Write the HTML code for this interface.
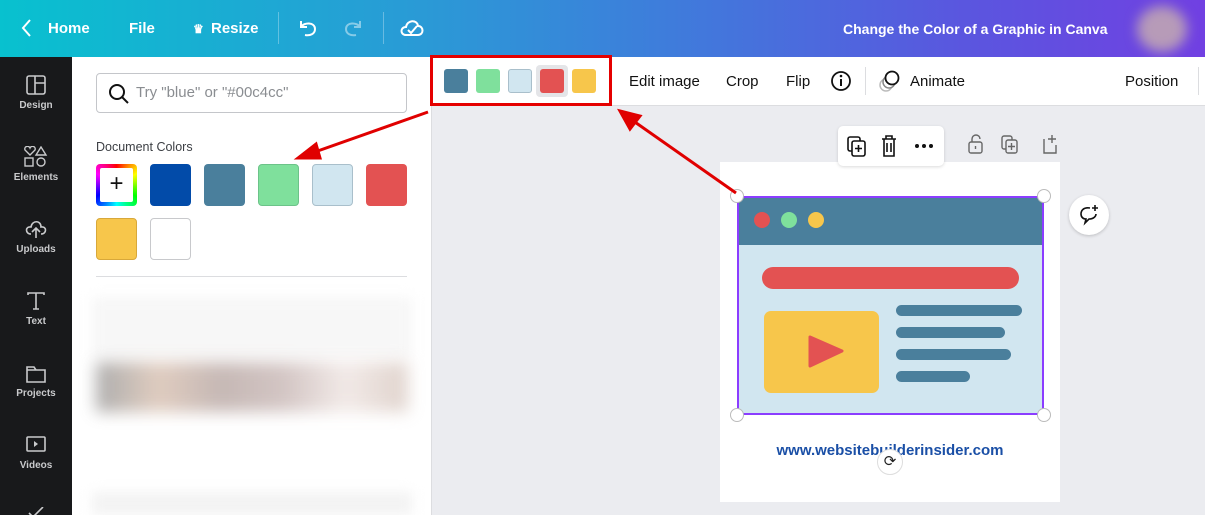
<!DOCTYPE html>
<html style="width:1205px;height:515px;overflow:hidden"><head><meta charset="utf-8"><style>
*{margin:0;padding:0;box-sizing:border-box}
body{width:1205px;height:515px;overflow:hidden;position:relative;font-family:"Liberation Sans",sans-serif;background:#ebecf0}
.a{position:absolute}
.top{left:0;top:0;width:1205px;height:57px;background:linear-gradient(90deg,#08c1cf 0%,#2a9ad6 35%,#3e7ddb 55%,#5a56df 80%,#7140e2 100%)}
.top span{position:absolute;color:#fff;font-weight:bold;font-size:15px;top:20px}
.side{left:0;top:57px;width:72px;height:458px;background:#18191b;overflow:hidden}
.side div{position:absolute;width:72px;text-align:center;color:#c9cacc;font-size:10px;font-weight:bold}
.panel{left:72px;top:57px;width:360px;height:458px;background:#fff;border-right:1px solid #dcdde0;overflow:hidden}
.sw{position:absolute;width:41px;height:42px;border-radius:4px}
.tb{left:432px;top:57px;width:773px;height:49px;background:#fff;border-bottom:1px solid #dcdde0}
.tb span{position:absolute;top:16px;font-size:15px;color:#111}
.ts{position:absolute;top:12px;width:24px;height:24px;border-radius:3px}
</style></head><body>
<div class="a top">
<svg class="a" style="left:20px;top:18px" width="14" height="20"><path d="M10 2 L3 10 L10 18" stroke="#fff" stroke-width="2" fill="none"/></svg>
<span style="left:48px">Home</span><span style="left:129px">File</span>
<span style="left:193px;font-size:12px;top:22px">♛</span><span style="left:211px">Resize</span>
<div class="a" style="left:278px;top:12px;width:1px;height:32px;background:rgba(255,255,255,.3)"></div>
<svg class="a" style="left:297px;top:17px" width="22" height="22"><path d="M4 4 v6 h6 M4 10 C7 5 18 5 18 12 C18 17 13 19 8 18" stroke="#fff" stroke-width="2" fill="none"/></svg>
<svg class="a" style="left:342px;top:17px" width="22" height="22"><path d="M18 4 v6 h-6 M18 10 C15 5 4 5 4 12 C4 17 9 19 14 18" stroke="rgba(255,255,255,.45)" stroke-width="2" fill="none"/></svg>
<div class="a" style="left:383px;top:12px;width:1px;height:32px;background:rgba(255,255,255,.3)"></div>
<svg class="a" style="left:399px;top:16px" width="26" height="22"><path d="M7 19 C1 19 1 11 7 11 C8 4 18 3 19 10 C25 10 25 19 19 19 Z" stroke="#fff" stroke-width="2" fill="none"/><path d="M9 14 l3 3 l6-7" stroke="#fff" stroke-width="2" fill="none"/></svg>
<span style="left:843px;font-size:14px;top:21px">Change the Color of a Graphic in Canva</span>
<div class="a" style="left:1137px;top:6px;width:50px;height:46px;border-radius:50%;background:#b79bb8;filter:blur(6px)"></div>
</div>
<div class="a side">
<svg class="a" style="left:26px;top:18px" width="20" height="20"><rect x="1" y="1" width="18" height="18" rx="2" stroke="#c9cacc" stroke-width="1.6" fill="none"/><path d="M9 1v18M9 8h10" stroke="#c9cacc" stroke-width="1.6"/></svg>
<div style="top:43px">Design</div>
<svg class="a" style="left:24px;top:89px" width="24" height="22"><path d="M6 9 L1 4 A2.5 2.5 0 0 1 6 2 A2.5 2.5 0 0 1 11 4 Z" stroke="#c9cacc" stroke-width="1.4" fill="none"/><path d="M17 1 L22 9 H12 Z" stroke="#c9cacc" stroke-width="1.4" fill="none"/><rect x="1" y="12" width="8" height="8" stroke="#c9cacc" stroke-width="1.4" fill="none"/><circle cx="17" cy="16" r="4" stroke="#c9cacc" stroke-width="1.4" fill="none"/></svg>
<div style="top:115px">Elements</div>
<svg class="a" style="left:24px;top:161px" width="24" height="22"><path d="M7 16 C1 16 1 8 7 9 C8 2 17 2 17 9 C23 8 23 16 17 16 M12 20 V10 M8 14 l4-4 l4 4" stroke="#c9cacc" stroke-width="1.6" fill="none"/></svg>
<div style="top:187px">Uploads</div>
<svg class="a" style="left:27px;top:235px" width="18" height="18"><path d="M1 3 V1 H17 V3 M9 1 V17 M6 17 H12" stroke="#c9cacc" stroke-width="1.6" fill="none"/></svg>
<div style="top:259px">Text</div>
<svg class="a" style="left:26px;top:308px" width="20" height="18"><path d="M1 2 H8 L10 5 H19 V17 H1 Z M1 5 H10" stroke="#c9cacc" stroke-width="1.6" fill="none"/></svg>
<div style="top:331px">Projects</div>
<svg class="a" style="left:26px;top:379px" width="20" height="16"><rect x="1" y="1" width="18" height="14" rx="1" stroke="#c9cacc" stroke-width="1.6" fill="none"/><path d="M8 5 L12 8 L8 11 Z" fill="#c9cacc"/></svg>
<div style="top:403px">Videos</div>
<svg class="a" style="left:28px;top:450px" width="16" height="10"><path d="M1 6 L5 10 L15 0" stroke="#c9cacc" stroke-width="1.6" fill="none"/></svg>
</div>
<div class="a panel">
<div class="a" style="left:24px;top:16px;width:311px;height:40px;border:1px solid #c4c6ca;border-radius:4px"></div>
<svg class="a" style="left:36px;top:26px" width="22" height="22"><circle cx="9" cy="9" r="7" stroke="#111" stroke-width="2" fill="none"/><path d="M14 14 L20 20" stroke="#111" stroke-width="2"/></svg>
<div class="a" style="left:64px;top:27px;font-size:15px;color:#8a8d91">Try "blue" or "#00c4cc"</div>
<div class="a" style="left:24px;top:83px;font-size:12.5px;color:#3c3f44">Document Colors</div>
<div class="sw" style="left:24px;top:107px;background:conic-gradient(red,yellow,lime,cyan,blue,magenta,red);padding:4px"><div style="width:33px;height:34px;background:#fff;border-radius:2px;text-align:center;font-size:24px;line-height:32px;color:#111">+</div></div>
<div class="sw" style="left:78px;top:107px;background:#024ba9"></div>
<div class="sw" style="left:132px;top:107px;background:#4a7f9c"></div>
<div class="sw" style="left:186px;top:107px;background:#7fe09c;border:1px solid #6cc389"></div>
<div class="sw" style="left:240px;top:107px;background:#d1e6f0;border:1px solid #a9bfcb"></div>
<div class="sw" style="left:294px;top:107px;background:#e35252"></div>
<div class="sw" style="left:24px;top:161px;background:#f7c64b;border:1px solid #d8a83a"></div>
<div class="sw" style="left:78px;top:161px;background:#fff;border:1px solid #c8c9cc"></div>
<div class="a" style="left:24px;top:219px;width:311px;height:1px;background:#dcdde0"></div>
<div class="a" style="left:20px;top:240px;width:320px;height:60px;background:#f7f7f7;filter:blur(6px)"></div>
<div class="a" style="left:24px;top:305px;width:312px;height:50px;background:linear-gradient(90deg,#999,#d8c0b0,#b8a7a3,#c8b7b5,#efe5e2,#d8c8c0);filter:blur(8px);opacity:.8"></div>
<div class="a" style="left:20px;top:435px;width:320px;height:23px;background:#f3f3f3;filter:blur(6px)"></div>
</div>
<div class="a tb">
<div class="ts" style="left:12px;background:#4a7f9c"></div>
<div class="ts" style="left:44px;background:#7fe09c"></div>
<div class="ts" style="left:76px;background:#d1e6f0;border:1px solid #a9bfcb"></div>
<div class="a" style="left:104px;top:8px;width:32px;height:32px;background:#e4e5e8;border-radius:4px"></div>
<div class="ts" style="left:108px;background:#e35252"></div>
<div class="ts" style="left:140px;background:#f7c64b"></div>
<span style="left:197px">Edit image</span><span style="left:294px">Crop</span><span style="left:354px">Flip</span>
<svg class="a" style="left:398px;top:13px" width="22" height="22"><circle cx="11" cy="11" r="9" stroke="#111" stroke-width="1.8" fill="none"/><path d="M11 9v7" stroke="#111" stroke-width="2"/><circle cx="11" cy="6" r="1.3" fill="#111"/></svg>
<div class="a" style="left:433px;top:10px;width:1px;height:28px;background:#dcdde0"></div>
<svg class="a" style="left:446px;top:12px" width="24" height="24"><circle cx="8" cy="16" r="6" stroke="#bbb" stroke-width="1.5" fill="none"/><circle cx="11" cy="13" r="6" stroke="#888" stroke-width="1.5" fill="#fff"/><circle cx="14" cy="9" r="6.5" stroke="#111" stroke-width="1.8" fill="#fff"/></svg>
<span style="left:478px">Animate</span><span style="left:693px">Position</span>
<div class="a" style="left:766px;top:10px;width:1px;height:28px;background:#dcdde0"></div>
</div>
<div class="a" style="left:430px;top:55px;width:182px;height:51px;border:3px solid #e50000"></div>
<div class="a" style="left:720px;top:162px;width:340px;height:340px;background:#fff"></div>
<div class="a" style="left:838px;top:126px;width:106px;height:40px;background:#fff;border-radius:5px;box-shadow:0 1px 3px rgba(0,0,0,.15)"></div>
<svg class="a" style="left:845px;top:134px" width="92" height="24"><rect x="3" y="3" width="12" height="14" rx="2" stroke="#111" stroke-width="1.6" fill="none"/><rect x="7" y="7" width="13" height="15" rx="2" stroke="#111" stroke-width="1.6" fill="#fff"/><path d="M13.5 11v7M10 14.5h7" stroke="#111" stroke-width="1.6"/><path d="M37 5h14M41 5V2h6v3M39 5v17h10V5M42 9v9M46 9v9" stroke="#111" stroke-width="1.6" fill="none"/><circle cx="72" cy="12" r="2" fill="#111"/><circle cx="79" cy="12" r="2" fill="#111"/><circle cx="86" cy="12" r="2" fill="#111"/></svg>
<svg class="a" style="left:964px;top:132px" width="96" height="24"><rect x="5" y="10" width="13" height="11" rx="2" stroke="#666" stroke-width="1.4" fill="none"/><path d="M8 10V7a4 4 0 0 1 8 0" stroke="#666" stroke-width="1.4" fill="none"/><path d="M11.5 14v3" stroke="#666" stroke-width="1.4"/><rect x="38" y="4" width="10" height="13" rx="2" stroke="#666" stroke-width="1.4" fill="none"/><rect x="42" y="8" width="11" height="13" rx="2" stroke="#666" stroke-width="1.4" fill="#ebecf0"/><path d="M47.5 11v7M44 14.5h7" stroke="#666" stroke-width="1.4"/><path d="M80 7v14h12V13M88 3v8M84 7h8" stroke="#666" stroke-width="1.4" fill="none"/></svg>
<div class="a" style="left:1069px;top:195px;width:40px;height:40px;border-radius:50%;background:#fff;box-shadow:0 1px 3px rgba(0,0,0,.2)"></div>
<svg class="a" style="left:1077px;top:203px" width="24" height="24"><path d="M13 5 C6 4 4 8 4 11 C4 14 6 16 9 16 L8 20 L12 16 C17 16 19 13 19 11" stroke="#111" stroke-width="1.6" fill="none"/><path d="M18 2v6M15 5h6" stroke="#111" stroke-width="1.6"/></svg>
<div class="a" style="left:737px;top:196px;width:307px;height:219px;background:#d1e6f0;border:2px solid #8b3dff"></div>
<div class="a" style="left:739px;top:198px;width:303px;height:47px;background:#4a7f9c"></div>
<div class="a" style="left:754px;top:212px;width:16px;height:16px;border-radius:50%;background:#e35252"></div>
<div class="a" style="left:781px;top:212px;width:16px;height:16px;border-radius:50%;background:#7fe09c"></div>
<div class="a" style="left:808px;top:212px;width:16px;height:16px;border-radius:50%;background:#f7c64b"></div>
<div class="a" style="left:762px;top:267px;width:257px;height:22px;border-radius:11px;background:#e35252"></div>
<div class="a" style="left:764px;top:311px;width:115px;height:82px;border-radius:7px;background:#f7c64b"></div>
<svg class="a" style="left:806px;top:333px" width="40" height="38"><path d="M4 4 L36 18 L4 33 Z" fill="#e35252" stroke="#e35252" stroke-width="3" stroke-linejoin="round"/></svg>
<div class="a" style="left:896px;top:305px;width:126px;height:11px;border-radius:6px;background:#4a7f9c"></div>
<div class="a" style="left:896px;top:327px;width:109px;height:11px;border-radius:6px;background:#4a7f9c"></div>
<div class="a" style="left:896px;top:349px;width:115px;height:11px;border-radius:6px;background:#4a7f9c"></div>
<div class="a" style="left:896px;top:371px;width:74px;height:11px;border-radius:6px;background:#4a7f9c"></div>
<div class="a" style="left:730px;top:189px;width:14px;height:14px;border-radius:50%;background:#fff;border:1px solid #bbb"></div>
<div class="a" style="left:1037px;top:189px;width:14px;height:14px;border-radius:50%;background:#fff;border:1px solid #bbb"></div>
<div class="a" style="left:730px;top:408px;width:14px;height:14px;border-radius:50%;background:#fff;border:1px solid #bbb"></div>
<div class="a" style="left:1037px;top:408px;width:14px;height:14px;border-radius:50%;background:#fff;border:1px solid #bbb"></div>
<div class="a" style="left:720px;top:442px;width:340px;text-align:center;font-size:15px;font-weight:bold;color:#1a4fa6">www.websitebuilderinsider.com</div>
<div class="a" style="left:877px;top:449px;width:26px;height:26px;border-radius:50%;background:#fff;border:1px solid #ddd;text-align:center;font-size:15px;line-height:24px;color:#222">⟳</div>
<svg class="a" style="left:0;top:0" width="1205" height="515"><g stroke="#e00000" stroke-width="3" fill="#e00000"><path d="M428 112 L312 153" /><path d="M298 158 L316 144 L320 158 Z"/><path d="M736 193 L632 120"/><path d="M620 111 L640 116 L630 129 Z"/></g></svg>
</body></html>
